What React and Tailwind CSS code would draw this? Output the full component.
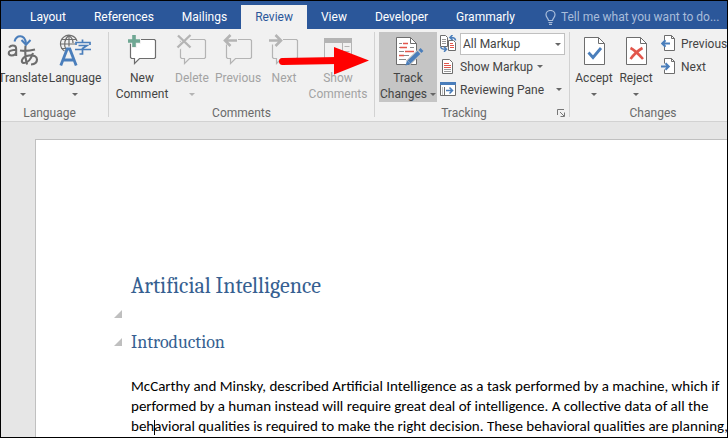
import React from 'react';
import clsx from 'clsx';

const TABS = ['Layout', 'References', 'Mailings', 'Review', 'View', 'Developer', 'Grammarly'];

const GRAY = '#6d6d6d';
const DIM = '#b4b4b4';
const BLUE = '#4a7ebb';

function Caret({ className }) {
  return (
    <svg width="6" height="3" viewBox="0 0 6 3" className={clsx('shrink-0', className)} aria-hidden="true">
      <path d="M0 0h6L3 3z" fill="currentColor" />
    </svg>
  );
}

/* ---------- large icons, 32x34 ---------- */

function TranslateIcon() {
  return (
    <svg width="32" height="34" viewBox="0 0 32 34" fill="none">
      <path d="M2 15.500c1-1.300 2.300-1.900 3.800-1.900 2.300 0 3.400 1.200 3.400 3.400v7M9.200 17.800c-4.500.2-7.500.8-7.500 3.200 0 1.600 1.200 2.400 2.900 2.400 2.400 0 4.400-1.500 4.600-3.800" stroke={GRAY} strokeWidth="2" />
      <path d="M13 18.500c5 .8 10 .3 15-.9M18.500 13.500c-.6 7-.3 13 1.600 19M26 21c-2 6-5.500 10-9 10-4 0-2.500-6.500 5-7.500 5-.6 8 1 8 4 0 3-2.500 4.800-6 5" stroke={GRAY} strokeWidth="2.100" />
      <path d="M7.500 9.500C9.500 2.500 17.500 2 19 11" stroke={BLUE} strokeWidth="2" />
      <path d="M14.500 8l4.500 4.700L23.500 8" stroke={BLUE} strokeWidth="2" />
    </svg>
  );
}

function LanguageIcon() {
  return (
    <svg width="32" height="34" viewBox="0 0 32 34" fill="none">
      <g stroke={GRAY} strokeWidth="1.200">
        <path d="M5.500 19A8.500 8.500 0 1 1 18 9" />
        <path d="M7 17.500C4.500 13 5.500 6 10 3.800c2.500 1.500 4 4 4 7.200" />
        <path d="M1 12h15M10 3.500v11M3 7.500h14M2.500 16.500h5" />
      </g>
      <path d="M1.800 33.500L8.200 17h2.600l6.400 16.500M4.500 28h10" stroke={BLUE} strokeWidth="2.800" />
      <path d="M23.500 7.500v2.500M17 13v-2.500h14V13M19.500 13.500h8.500l-4.500 3v5.500h-3M16 17.500h16" stroke={BLUE} strokeWidth="1.700" />
    </svg>
  );
}

function Bubble({ stroke, fill = 'none', children }) {
  return (
    <svg width="32" height="34" viewBox="0 0 32 34" fill="none">
      <path d="M4.500 7.500h24l1 1v17l-1 1h-15l-5 5v-5h-3l-1-1v-17z" stroke={stroke} strokeWidth="1.200" fill={fill} />
      {children}
    </svg>
  );
}

function NewCommentIcon() {
  return (
    <Bubble stroke={GRAY} fill="#fff">
      <path d="M8 2v14M1 9h14" stroke="#f1f1f1" strokeWidth="5.500" />
      <path d="M8 3v12M2 9h12" stroke="#6fa793" strokeWidth="3.600" />
    </Bubble>
  );
}

function DeleteIcon() {
  return (
    <Bubble stroke={DIM}>
      <path d="M2 3l13 13M15 3L2 16" stroke="#f1f1f1" strokeWidth="5" />
      <path d="M2 3.500l12.500 12M14.500 3L1.500 15.500" stroke={DIM} strokeWidth="2.400" />
    </Bubble>
  );
}

function PrevCommentIcon() {
  return (
    <Bubble stroke={DIM}>
      <path d="M1 9h15" stroke="#f1f1f1" strokeWidth="7" />
      <path d="M15 8.500H3M8.500 3L3 8.500 8.500 14" stroke={DIM} strokeWidth="2.600" />
    </Bubble>
  );
}

function NextCommentIcon() {
  return (
    <Bubble stroke={DIM}>
      <path d="M0 9h15" stroke="#f1f1f1" strokeWidth="7" />
      <path d="M1 8.500h12M7.500 3l5.500 5.500L7.500 14" stroke={DIM} strokeWidth="2.600" />
    </Bubble>
  );
}

function ShowCommentsIcon() {
  return (
    <svg width="32" height="34" viewBox="0 0 32 34" fill="none">
      <path d="M2.500 6.500h27v24h-27z" stroke={DIM} />
      <path d="M2 6h28v5H2z" fill={DIM} />
      <path d="M20.500 11v19M22.500 14.500h5M22.500 19.500h5" stroke={DIM} />
    </svg>
  );
}

function TrackIcon() {
  return (
    <svg width="32" height="34" viewBox="0 0 32 34" fill="none">
      <path d="M4.500 5.500h14l6 6v21h-20z" fill="#fff" stroke={GRAY} />
      <path d="M18.500 5.500v6h6" stroke={GRAY} />
      <path d="M7 11.500h3M7 15.500h3M18 15.500h4M7 19.500h5M7 23.500h10M7 27.500h7" stroke="#8a8a8a" />
      <path d="M11 11.500h5M8 15.500h7M13 19.500h9M7 23.500h5" stroke="#e2564b" strokeWidth="1.300" />
      <path d="M16 31L29 18.500" stroke="#c5c5c5" strokeWidth="6" />
      <path d="M17 30L27 20.500" stroke={BLUE} strokeWidth="4" />
      <path d="M28 19.500l2-2" stroke={BLUE} strokeWidth="4" />
      <path d="M13.500 33.500l1.500-5 3.500 3.500z" fill={BLUE} />
    </svg>
  );
}

function DecisionIcon({ children }) {
  return (
    <svg width="32" height="34" viewBox="0 0 32 34" fill="none">
      <path d="M6.500 5.500h14l6 6v21h-20z" fill="#fff" stroke={GRAY} />
      <path d="M20.500 5.500v6h6" stroke={GRAY} />
      {children}
    </svg>
  );
}

/* ---------- small icons ---------- */

function MarkupModeIcon() {
  return (
    <svg width="17" height="17" viewBox="0 0 17 17" fill="none">
      <path d="M.5 .5h5l2 2v9h-7z" fill="#fff" stroke={GRAY} />
      <path d="M2 4.500h4M2 6.500h4M2 8.500h4" stroke="#9a9a9a" />
      <path d="M8.500 5.500h5l2 2v8h-7z" fill="#fff" stroke={GRAY} />
      <path d="M10 8.500h3M10 10.500h4M10 12.500h4" stroke="#e2564b" />
      <path d="M15.500 5.500c0-2-1-3-4.500-3M12.500 0L10 2.500 12.500 5" stroke={BLUE} strokeWidth="1.600" />
      <path d="M.800 12c.2 1.800 1.500 2.300 4.700 2.300M4 11.800l2.500 2.500L4 16.800" stroke={BLUE} strokeWidth="1.600" />
    </svg>
  );
}

function ShowMarkupIcon() {
  return (
    <svg width="17" height="15" viewBox="0 0 17 15" fill="none">
      <path d="M2.500 .5h7l3 3v11h-10z" fill="#fff" stroke={GRAY} />
      <path d="M4 4.500h5M4 6.500h7M4 8.500h7" stroke="#e2564b" />
      <path d="M4 10.500h7M4 12.500h7" stroke="#9a9a9a" />
    </svg>
  );
}

function PaneIcon() {
  return (
    <svg width="17" height="15" viewBox="0 0 17 15" fill="none">
      <path d="M.5 .5h15v13H.5z" fill="#fff" stroke={GRAY} />
      <path d="M0 0h16v3H0z" fill={BLUE} />
      <path d="M4.500 5v8" stroke={GRAY} />
      <path d="M2.500 5v8" stroke="#bdbdbd" />
      <path d="M6 8.500h6M9.500 5.500l3 3-3 3" stroke={BLUE} strokeWidth="1.500" />
    </svg>
  );
}

function StepIcon({ next }) {
  return (
    <svg width="15" height="17" viewBox="0 0 15 17" fill="none">
      <path d="M3.500 .5h7l3 3v12h-10z" fill="#fff" stroke={GRAY} />
      <path d="M10.500 .5v3h3" stroke={GRAY} />
      <path d="M0 8.500h5" stroke="#f1f1f1" strokeWidth="6" />
      {next
        ? <path d="M0 8.500h7M4.500 5.200l3.300 3.300-3.300 3.300" stroke={BLUE} strokeWidth="2" />
        : <path d="M9 8.500H2M4.500 5.200L1.200 8.500l3.300 3.300" stroke={BLUE} strokeWidth="2" />}
    </svg>
  );
}

/* ---------- ribbon pieces ---------- */

function BigButton({ icon, label, second, caret, disabled, active, className }) {
  return (
    <button
      type="button"
      disabled={disabled}
      className={clsx('flex h-[70px] shrink-0 flex-col items-center whitespace-nowrap leading-4', disabled ? 'text-[#a3a3a3]' : 'text-[#444]', active && 'bg-[#c5c5c5]', className)}
    >
      <span className="flex h-[38px] shrink-0 items-start">{icon}</span>
      <span>{label}</span>
      <span className="flex h-4 items-center gap-[3px]">
        {second}
        {caret && <Caret className={disabled ? 'text-[#b4b4b4]' : 'text-[#666]'} />}
      </span>
    </button>
  );
}

function SmallButton({ icon, label, caret, wide }) {
  return (
    <button type="button" className="flex h-[23px] items-center whitespace-nowrap text-[#444]">
      <span className="flex w-5 shrink-0">{icon}</span>
      {label}
      {caret && <Caret className={clsx('text-[#666]', wide ? 'ml-3' : 'ml-1')} />}
    </button>
  );
}

function Group({ name, launcher, last, className, children }) {
  return (
    <section aria-label={name} className={clsx('flex shrink-0 flex-col pt-[3px]', className)}>
      <div className={clsx('relative flex h-[85px] flex-col', !last && 'border-r border-[#d2d2d2]')}>
        <div className="flex h-[70px]">{children}</div>
        <div className={clsx('mt-[3px] h-4 text-center leading-4 text-[#6a6a6a]', launcher && 'pr-4')}>{name}</div>
        {launcher && (
          <button type="button" aria-label={`${name} options`} className="absolute right-1 bottom-0">
            <svg width="8" height="8" viewBox="0 0 8 8" fill="none" stroke="#777" className="block">
              <path d="M.5 6V.5H7M3 3l4 4M7.500 3.500v4h-4" />
            </svg>
          </button>
        )}
      </div>
    </section>
  );
}

function Ribbon() {
  return (
    <div className="relative flex h-[93px] shrink-0 overflow-hidden border-b border-[#d2d2d2] bg-[#f1f1f1]">
      <Group name="Language" className="-ml-[10px] w-[118px]">
        <div className="flex flex-1 justify-end pr-1">
          <BigButton icon={<TranslateIcon />} label="Translate" caret className="w-[46px]" />
          <BigButton icon={<LanguageIcon />} label="Language" caret className="w-[58px]" />
        </div>
      </Group>
      <Group name="Comments" className="w-[266px]">
        <div className="flex pl-1">
          <BigButton icon={<NewCommentIcon />} label="New" second="Comment" className="w-[58px]" />
          <BigButton icon={<DeleteIcon />} label="Delete" caret disabled className="w-[42px]" />
          <BigButton icon={<PrevCommentIcon />} label="Previous" disabled className="w-[50px]" />
          <BigButton icon={<NextCommentIcon />} label="Next" disabled className="w-[42px]" />
          <BigButton icon={<ShowCommentsIcon />} label="Show" second="Comments" disabled className="w-[66px]" />
        </div>
      </Group>
      <Group name="Tracking" launcher className="w-[195px]">
        <div className="flex flex-1 gap-[3px] pl-1">
          <BigButton icon={<TrackIcon />} label="Track" second="Changes" caret active className="w-[58px]" />
          <div className="flex flex-1 flex-col items-start pr-1">
            <div className="flex h-[23px] w-full items-center">
              <span className="flex w-5 shrink-0"><MarkupModeIcon /></span>
              <div className="relative flex-1">
                <select aria-label="Display for review" defaultValue="All Markup" className="block h-[22px] w-full appearance-none border border-[#c0c0c0] bg-white pl-[2px] text-[#444]">
                  <option>All Markup</option>
                  <option>Simple Markup</option>
                  <option>No Markup</option>
                  <option>Original</option>
                </select>
                <Caret className="pointer-events-none absolute top-[10px] right-1 text-[#666]" />
              </div>
            </div>
            <SmallButton icon={<ShowMarkupIcon />} label="Show Markup" caret />
            <SmallButton icon={<PaneIcon />} label="Reviewing Pane" caret wide />
          </div>
        </div>
      </Group>
      <Group name="Changes" last className="-mr-[9px] flex-1">
        <div className="flex pl-[3px]">
          <BigButton icon={<DecisionIcon><path d="M10.500 20.500l4.500 5 8-9.500" stroke={BLUE} strokeWidth="2.800" /></DecisionIcon>} label="Accept" caret className="w-[42px]" />
          <BigButton icon={<DecisionIcon><path d="M10.500 16c4 2 8.500 6.500 12.500 11M22.500 16c-4.500 2.500-9 7-12 11" stroke="#e2564b" strokeWidth="2.600" /></DecisionIcon>} label="Reject" caret className="w-[42px]" />
          <div className="flex flex-col items-start pl-1">
            <SmallButton icon={<StepIcon />} label="Previous" />
            <SmallButton icon={<StepIcon next />} label="Next" />
          </div>
        </div>
      </Group>
      {/* callout arrow pointing at Track Changes */}
      <svg width="92" height="28" viewBox="0 0 92 28" className="pointer-events-none absolute top-[18px] left-[277px]" aria-hidden="true">
        <path d="M4.500 14.500L60 13.500" stroke="#f00" strokeWidth="7" strokeLinecap="round" />
        <path d="M56 0l35 13.500L56 27.500z" fill="#f00" />
      </svg>
    </div>
  );
}

function Collapse({ label }) {
  return (
    <button type="button" aria-label={label} className="w-[17px] shrink-0">
      <svg width="8" height="8" viewBox="0 0 8 8"><path d="M8 0v8H0z" fill="#bfbfbf" /></svg>
    </button>
  );
}

export default function App() {
  return (
    <div className="flex h-screen flex-col overflow-hidden border border-black bg-[#e6e6e6] font-['Roboto','Noto_Sans',sans-serif] text-[12px]">
      <nav className="flex h-7 shrink-0 items-end overflow-hidden bg-[#2b579a] pl-[15px] text-white">
        {TABS.map(t => (
          <button
            key={t}
            type="button"
            className={clsx('h-6 shrink-0 px-[14px] leading-6', t === 'Review' && 'bg-[#f1f1f1] text-[#2b579a]')}
          >
            {t}
          </button>
        ))}
        <label className="flex h-6 flex-1 items-center gap-[5px] pl-4 text-[#a9bddb]">
          <svg width="11" height="15" viewBox="0 0 11 15" fill="none" stroke="currentColor" strokeWidth="1.200" className="shrink-0">
            <path d="M3.500 10.500C3.500 8.500 1 7.500 1 4.800a4.500 4.300 0 0 1 9 0c0 2.700-2.500 3.700-2.500 5.700zM3.500 12.500h4M4 14.300h3" />
          </svg>
          <input type="text" aria-label="Tell me" placeholder="Tell me what you want to do..." className="w-full min-w-0 bg-transparent outline-none placeholder:text-[#a9bddb]" />
        </label>
      </nav>

      <Ribbon />

      <main className="flex flex-1 overflow-hidden pt-[17px] pl-[34px]">
        <article className="flex-1 border-t border-l border-[#c0c0c0] bg-white pt-[132px] pl-[78px] font-['Calibri','Lato',sans-serif] text-black">
          <h1 className="pl-[17px] font-['Cambria','Liberation_Serif',serif] text-[22px] leading-7 text-[#365f91]">Artificial Intelligence</h1>
          <div className="flex h-7 items-center"><Collapse label="Collapse heading" /></div>
          <div className="flex h-7 items-center">
            <Collapse label="Collapse Introduction" />
            <h2 className="font-['Cambria','Liberation_Serif',serif] text-[18px] text-[#365f91]">Introduction</h2>
          </div>
          <p className="mt-5 pl-[17px] text-[15px] leading-5 whitespace-nowrap">
            McCarthy and Minsky, described Artificial Intelligence as a task performed by a machine, which if<br />
            performed by a human instead will require great deal of intelligence. A collective data of all the<br />
            beh<span className="-mr-px inline-block h-[15px] w-px bg-black align-middle" />avioral qualities is required to make the right decision. These behavioral qualities are planning,
          </p>
        </article>
      </main>
    </div>
  );
}
